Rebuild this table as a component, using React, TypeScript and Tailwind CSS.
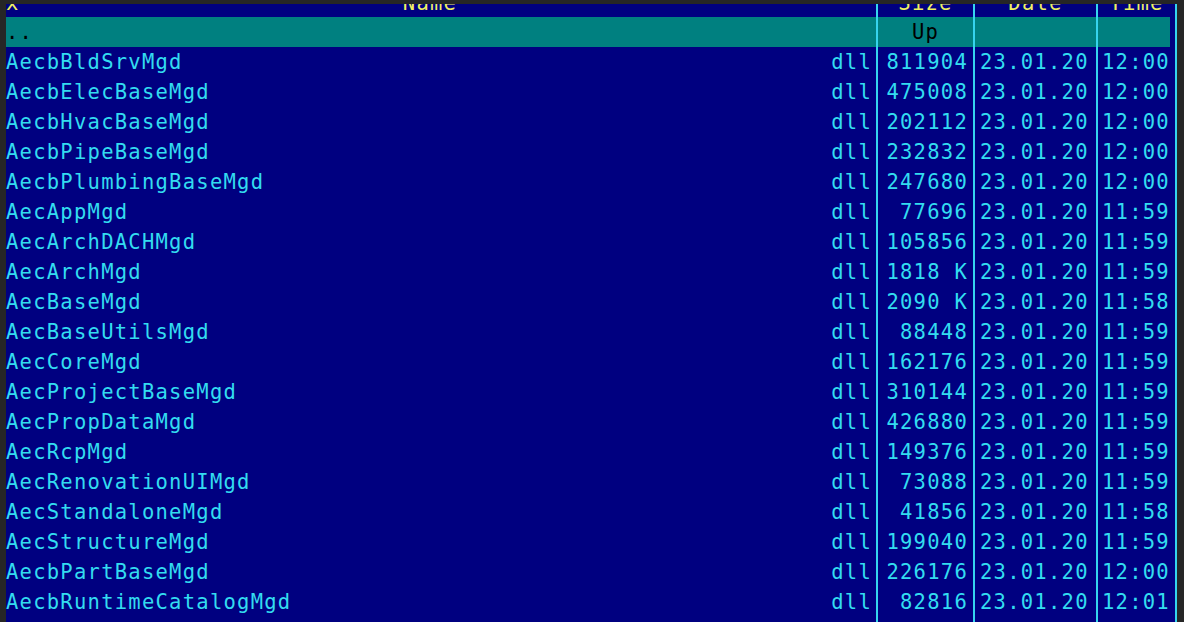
import React from "react";

interface FileRow {
  name: string;
  size: string;
  time: string;
}

const files: FileRow[] = [
  { name: "AecbBldSrvMgd", size: "811904", time: "12:00" },
  { name: "AecbElecBaseMgd", size: "475008", time: "12:00" },
  { name: "AecbHvacBaseMgd", size: "202112", time: "12:00" },
  { name: "AecbPipeBaseMgd", size: "232832", time: "12:00" },
  { name: "AecbPlumbingBaseMgd", size: "247680", time: "12:00" },
  { name: "AecAppMgd", size: "77696", time: "11:59" },
  { name: "AecArchDACHMgd", size: "105856", time: "11:59" },
  { name: "AecArchMgd", size: "1818 K", time: "11:59" },
  { name: "AecBaseMgd", size: "2090 K", time: "11:58" },
  { name: "AecBaseUtilsMgd", size: "88448", time: "11:59" },
  { name: "AecCoreMgd", size: "162176", time: "11:59" },
  { name: "AecProjectBaseMgd", size: "310144", time: "11:59" },
  { name: "AecPropDataMgd", size: "426880", time: "11:59" },
  { name: "AecRcpMgd", size: "149376", time: "11:59" },
  { name: "AecRenovationUIMgd", size: "73088", time: "11:59" },
  { name: "AecStandaloneMgd", size: "41856", time: "11:58" },
  { name: "AecStructureMgd", size: "199040", time: "11:59" },
  { name: "AecbPartBaseMgd", size: "226176", time: "12:00" },
  { name: "AecbRuntimeCatalogMgd", size: "82816", time: "12:01" },
];

const App: React.FC = () => {
  return (
    <div
      className="w-[1184px] h-[622px] bg-[#262626] pt-[4px] pl-[6px] pr-[7px] overflow-hidden"
      style={{ fontFamily: '"DejaVu Sans Mono", "Liberation Mono", monospace' }}
    >
      {/* Panel */}
      <div className="h-full bg-[#000080] border-r-2 border-[#36d4ee] flex flex-col text-[20.5px] tracking-[1.25px] leading-none">
        {/* Header (top cut off) */}
        <div className="h-[13px] overflow-hidden">
          <div className="-mt-[16px] h-[30px] flex text-[#f0f060]">
            <div className="w-[870px] h-full flex items-center">
              <span className="w-[14px]">x</span>
              <span className="flex-1 text-center pr-[36px]">Name</span>
            </div>
            <div className="w-[97px] h-full border-l-2 border-[#36d4ee] flex items-center justify-center">Size</div>
            <div className="w-[123px] h-full border-l-2 border-[#36d4ee] flex items-center justify-center">Date</div>
            <div className="w-[79px] h-full border-l-2 border-[#36d4ee] flex items-center justify-center">Time</div>
          </div>
        </div>

        {/* Up row (selected) */}
        <div className="h-[30px] flex text-black">
          <div className="w-[870px] h-full bg-[#008080] flex items-center">..</div>
          <div className="w-[97px] h-full bg-[#008080] border-l-2 border-[#36d4ee] flex items-center justify-center">Up</div>
          <div className="w-[123px] h-full bg-[#008080] border-l-2 border-[#36d4ee]"></div>
          <div className="w-[79px] h-full border-l-2 border-[#36d4ee]">
            <div className="h-full mr-[5px] bg-[#008080]"></div>
          </div>
        </div>

        {/* File rows */}
        {files.map((f) => (
          <div key={f.name} className="h-[30px] flex text-[#33dcf0]">
            <div className="w-[870px] h-full flex items-center justify-between pr-[4px]">
              <span>{f.name}</span>
              <span>dll</span>
            </div>
            <div className="w-[97px] h-full border-l-2 border-[#36d4ee] flex items-center justify-end pr-[5px] whitespace-pre">
              {f.size}
            </div>
            <div className="w-[123px] h-full border-l-2 border-[#36d4ee] flex items-center pl-[5px]">23.01.20</div>
            <div className="w-[79px] h-full border-l-2 border-[#36d4ee] flex items-center pl-[4px]">{f.time}</div>
          </div>
        ))}

        {/* Rest of panel */}
        <div className="flex-1 flex">
          <div className="w-[870px]"></div>
          <div className="w-[97px] border-l-2 border-[#36d4ee]"></div>
          <div className="w-[123px] border-l-2 border-[#36d4ee]"></div>
          <div className="w-[79px] border-l-2 border-[#36d4ee]"></div>
        </div>
      </div>
    </div>
  );
};

export default App;
